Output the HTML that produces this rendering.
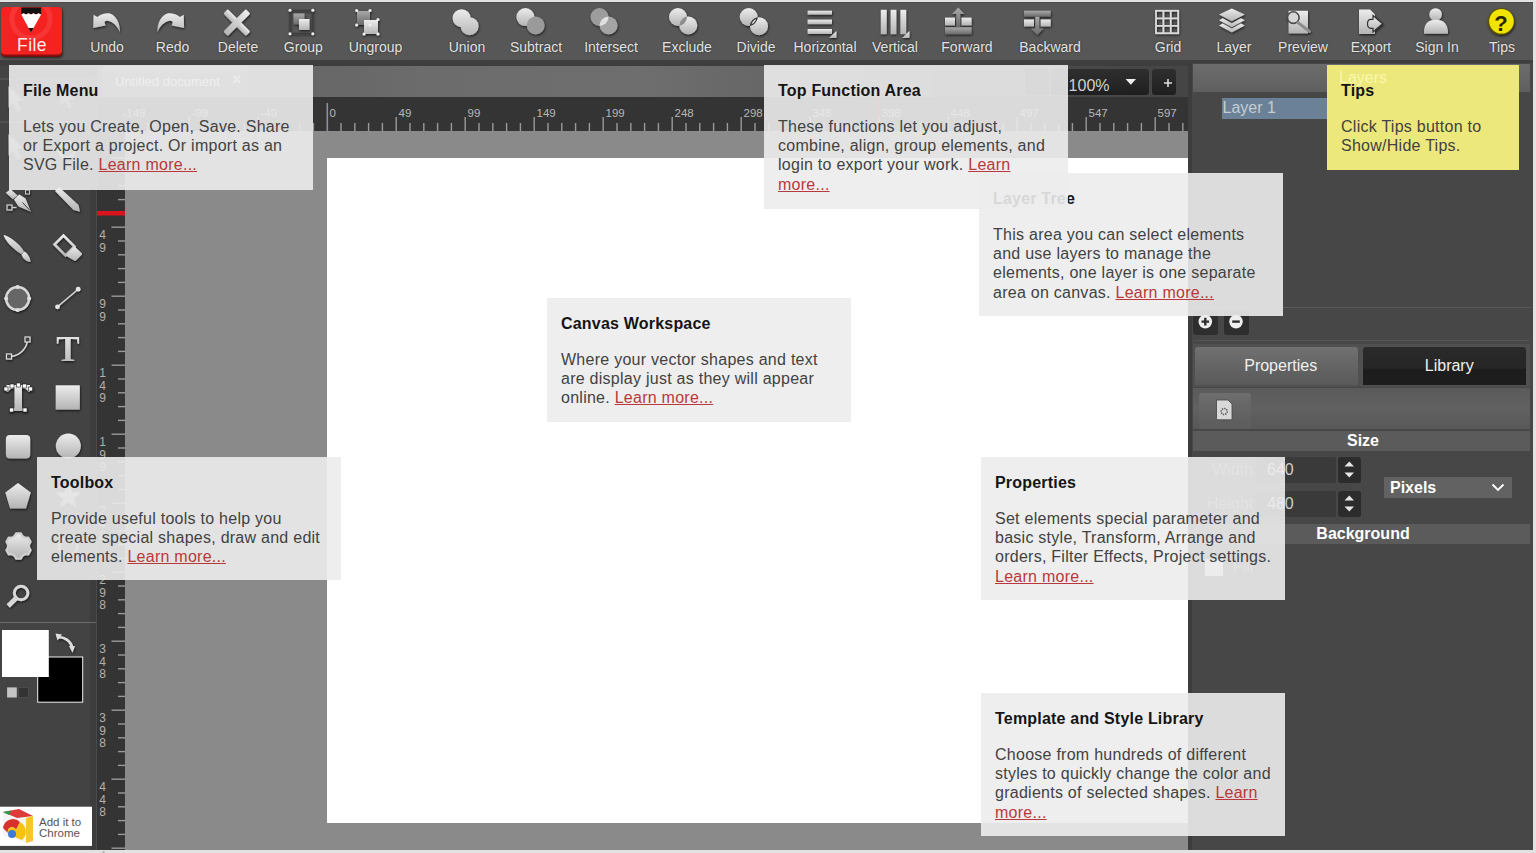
<!DOCTYPE html>
<html><head><meta charset="utf-8">
<style>
*{box-sizing:border-box;margin:0;padding:0}
html,body{width:1536px;height:853px;overflow:hidden;background:#e2e2e2;font-family:"Liberation Sans",sans-serif;position:relative}
.abs{position:absolute}
#toolbar{left:0;top:2px;width:1533px;height:58px;background:#575757;border-top:1px solid #4c4c4c}
#toolbox{left:0;top:60px;width:97px;height:790px;background:linear-gradient(90deg,#434343 0,#434343 90px,#3d3d3d 90px,#3d3d3d 96px,#4a4a4a 96px)}
#tabbar{left:97px;top:60px;width:1091px;height:37px;background:linear-gradient(90deg,#5c5c5c 0%,#6c6c6c 30%,#6e6e6e 50%,#666 62%,#4c4c4c 78%,#454545 100%)}
#tabtop{left:0;top:60px;width:1533px;height:6px;background:#3e3e3e}
#vruler{left:97px;top:131px;width:28px;height:719px;background:#343434}
#hruler{left:97px;top:97px;width:1091px;height:34px;background:#343434}
#canvasarea{left:125px;top:131px;width:1063px;height:719px;background:#8a8a8a}
#canvas{left:327px;top:158px;width:861px;height:665px;background:#fff}
#rpanel{left:1188px;top:63px;width:345px;height:787px;background:#474747;border-left:4px solid #3d3d3d}
.tip{position:absolute;background:rgba(236,236,236,0.9);width:304px;color:#424242}
.tip h3{position:absolute;left:14px;font-size:16px;line-height:19.2px;letter-spacing:0.2px;font-weight:bold;color:#151515;white-space:nowrap}
.tip p{position:absolute;left:14px;font-size:16px;line-height:19.2px;letter-spacing:0.26px;width:278px}
.tip a{color:#b8393b;text-decoration:underline}
.tb{position:absolute;top:39px;font-size:14px;line-height:16px;color:#e2e2e2;text-align:center;width:90px;margin-left:-45px;text-shadow:0 0 2px rgba(0,0,0,.55)}
svg text{font-family:"Liberation Sans",sans-serif}
</style></head><body>
<div id="toolbar" class="abs"></div>
<div id="toolbox" class="abs"></div>
<div id="tabbar" class="abs"></div>
<div id="tabtop" class="abs"></div>
<div id="hruler" class="abs"></div>
<div id="vruler" class="abs"></div>
<div id="canvasarea" class="abs"></div>
<div id="canvas" class="abs"></div>
<div id="rpanel" class="abs"></div>
<div class="abs" style="left:102px;top:66px;width:147px;height:31px;background:linear-gradient(#7a7a7a,#6c6c6c);border-radius:3px 3px 0 0"></div>
<div class="abs" style="left:115px;top:74px;font-size:13px;line-height:15px;color:#fff">Untitled document</div>
<div class="abs" style="left:232px;top:72px;font-size:16px;line-height:16px;color:#ddd;font-weight:bold">&#215;</div>
<div class="abs" style="left:1025px;top:68.5px;width:24px;height:26px;background:#2c2c2c;border-radius:3px"></div>
<div class="abs" style="left:1051px;top:68.5px;width:98px;height:26px;background:linear-gradient(#2e2e2e,#262626 60%,#1e1e1e);border-radius:0 3px 3px 0"></div>
<div class="abs" style="left:1151.7px;top:68.5px;width:24.7px;height:26px;background:linear-gradient(#2e2e2e,#262626 60%,#1e1e1e);border-radius:3px"></div>
<div class="abs" style="left:1068.6px;top:78.4px;font-size:16px;line-height:16px;color:#d0d0d0">100%</div>
<svg class="abs" style="left:1120px;top:74px" width="60" height="16"><path d="M5.6,4.9 L16,4.9 L10.8,10.7Z" fill="#f0f0f0"/><path d="M48,5 V13 M44,9 H52" stroke="#ddd" stroke-width="1.6"/></svg>

<svg class="abs" style="left:0;top:0" width="1536" height="853" viewBox="0 0 1536 853">
<defs>
 <linearGradient id="ig" x1="0" y1="0" x2="0" y2="1"><stop offset="0" stop-color="#ececec"/><stop offset="1" stop-color="#b4b4b4"/></linearGradient>
 <linearGradient id="igd" x1="0" y1="0" x2="0" y2="1"><stop offset="0" stop-color="#a8a8a8"/><stop offset="1" stop-color="#6a6a6a"/></linearGradient>
 <linearGradient id="igu" gradientUnits="userSpaceOnUse" x1="0" y1="9" x2="0" y2="35"><stop offset="0" stop-color="#ececec"/><stop offset="1" stop-color="#b8b8b8"/></linearGradient>
 <filter id="sh" x="-30%" y="-30%" width="160%" height="160%"><feDropShadow dx="0.6" dy="1.2" stdDeviation="0.8" flood-color="#000" flood-opacity="0.7"/></filter>
</defs>
<!-- rulers -->
<g font-size="11.5" fill="#b8b8b8"><rect x="133.3" y="123" width="1.4" height="8" fill="#9a9a9a"/><rect x="147.1" y="123" width="1.4" height="8" fill="#9a9a9a"/><rect x="160.9" y="123" width="1.4" height="8" fill="#9a9a9a"/><rect x="174.7" y="123" width="1.4" height="8" fill="#9a9a9a"/><rect x="188.5" y="117" width="1.4" height="14" fill="#9a9a9a"/><rect x="202.3" y="123" width="1.4" height="8" fill="#9a9a9a"/><rect x="216.1" y="123" width="1.4" height="8" fill="#9a9a9a"/><rect x="229.9" y="123" width="1.4" height="8" fill="#9a9a9a"/><rect x="243.7" y="123" width="1.4" height="8" fill="#9a9a9a"/><rect x="257.5" y="117" width="1.4" height="14" fill="#9a9a9a"/><rect x="271.3" y="123" width="1.4" height="8" fill="#9a9a9a"/><rect x="285.1" y="123" width="1.4" height="8" fill="#9a9a9a"/><rect x="298.9" y="123" width="1.4" height="8" fill="#9a9a9a"/><rect x="312.7" y="123" width="1.4" height="8" fill="#9a9a9a"/><rect x="326.5" y="103" width="1.6" height="28" fill="#8c8ca4"/><rect x="340.3" y="123" width="1.4" height="8" fill="#9a9a9a"/><rect x="354.1" y="123" width="1.4" height="8" fill="#9a9a9a"/><rect x="367.9" y="123" width="1.4" height="8" fill="#9a9a9a"/><rect x="381.7" y="123" width="1.4" height="8" fill="#9a9a9a"/><rect x="395.5" y="117" width="1.4" height="14" fill="#9a9a9a"/><rect x="409.3" y="123" width="1.4" height="8" fill="#9a9a9a"/><rect x="423.1" y="123" width="1.4" height="8" fill="#9a9a9a"/><rect x="436.9" y="123" width="1.4" height="8" fill="#9a9a9a"/><rect x="450.7" y="123" width="1.4" height="8" fill="#9a9a9a"/><rect x="464.5" y="117" width="1.4" height="14" fill="#9a9a9a"/><rect x="478.3" y="123" width="1.4" height="8" fill="#9a9a9a"/><rect x="492.1" y="123" width="1.4" height="8" fill="#9a9a9a"/><rect x="505.9" y="123" width="1.4" height="8" fill="#9a9a9a"/><rect x="519.7" y="123" width="1.4" height="8" fill="#9a9a9a"/><rect x="533.5" y="117" width="1.4" height="14" fill="#9a9a9a"/><rect x="547.3" y="123" width="1.4" height="8" fill="#9a9a9a"/><rect x="561.1" y="123" width="1.4" height="8" fill="#9a9a9a"/><rect x="574.9" y="123" width="1.4" height="8" fill="#9a9a9a"/><rect x="588.7" y="123" width="1.4" height="8" fill="#9a9a9a"/><rect x="602.5" y="117" width="1.4" height="14" fill="#9a9a9a"/><rect x="616.3" y="123" width="1.4" height="8" fill="#9a9a9a"/><rect x="630.1" y="123" width="1.4" height="8" fill="#9a9a9a"/><rect x="643.9" y="123" width="1.4" height="8" fill="#9a9a9a"/><rect x="657.7" y="123" width="1.4" height="8" fill="#9a9a9a"/><rect x="671.5" y="117" width="1.4" height="14" fill="#9a9a9a"/><rect x="685.3" y="123" width="1.4" height="8" fill="#9a9a9a"/><rect x="699.1" y="123" width="1.4" height="8" fill="#9a9a9a"/><rect x="712.9" y="123" width="1.4" height="8" fill="#9a9a9a"/><rect x="726.7" y="123" width="1.4" height="8" fill="#9a9a9a"/><rect x="740.5" y="117" width="1.4" height="14" fill="#9a9a9a"/><rect x="754.3" y="123" width="1.4" height="8" fill="#9a9a9a"/><rect x="768.1" y="123" width="1.4" height="8" fill="#9a9a9a"/><rect x="781.9" y="123" width="1.4" height="8" fill="#9a9a9a"/><rect x="795.7" y="123" width="1.4" height="8" fill="#9a9a9a"/><rect x="809.5" y="117" width="1.4" height="14" fill="#9a9a9a"/><rect x="823.3" y="123" width="1.4" height="8" fill="#9a9a9a"/><rect x="837.1" y="123" width="1.4" height="8" fill="#9a9a9a"/><rect x="850.9" y="123" width="1.4" height="8" fill="#9a9a9a"/><rect x="864.7" y="123" width="1.4" height="8" fill="#9a9a9a"/><rect x="878.5" y="117" width="1.4" height="14" fill="#9a9a9a"/><rect x="892.3" y="123" width="1.4" height="8" fill="#9a9a9a"/><rect x="906.1" y="123" width="1.4" height="8" fill="#9a9a9a"/><rect x="919.9" y="123" width="1.4" height="8" fill="#9a9a9a"/><rect x="933.7" y="123" width="1.4" height="8" fill="#9a9a9a"/><rect x="947.5" y="117" width="1.4" height="14" fill="#9a9a9a"/><rect x="961.3" y="123" width="1.4" height="8" fill="#9a9a9a"/><rect x="975.1" y="123" width="1.4" height="8" fill="#9a9a9a"/><rect x="988.9" y="123" width="1.4" height="8" fill="#9a9a9a"/><rect x="1002.7" y="123" width="1.4" height="8" fill="#9a9a9a"/><rect x="1016.5" y="117" width="1.4" height="14" fill="#9a9a9a"/><rect x="1030.3" y="123" width="1.4" height="8" fill="#9a9a9a"/><rect x="1044.1" y="123" width="1.4" height="8" fill="#9a9a9a"/><rect x="1057.9" y="123" width="1.4" height="8" fill="#9a9a9a"/><rect x="1071.7" y="123" width="1.4" height="8" fill="#9a9a9a"/><rect x="1085.5" y="117" width="1.4" height="14" fill="#9a9a9a"/><rect x="1099.3" y="123" width="1.4" height="8" fill="#9a9a9a"/><rect x="1113.1" y="123" width="1.4" height="8" fill="#9a9a9a"/><rect x="1126.9" y="123" width="1.4" height="8" fill="#9a9a9a"/><rect x="1140.7" y="123" width="1.4" height="8" fill="#9a9a9a"/><rect x="1154.5" y="117" width="1.4" height="14" fill="#9a9a9a"/><rect x="1168.3" y="123" width="1.4" height="8" fill="#9a9a9a"/><rect x="1182.1" y="123" width="1.4" height="8" fill="#9a9a9a"/><text x="122.5" y="116.5">-149</text><text x="191.5" y="116.5">-99</text><text x="260.5" y="116.5">-49</text><text x="329.5" y="116.5">0</text><text x="398.5" y="116.5">49</text><text x="467.5" y="116.5">99</text><text x="536.5" y="116.5">149</text><text x="605.5" y="116.5">199</text><text x="674.5" y="116.5">248</text><text x="743.5" y="116.5">298</text><text x="812.5" y="116.5">348</text><text x="881.5" y="116.5">398</text><text x="950.5" y="116.5">448</text><text x="1019.5" y="116.5">497</text><text x="1088.5" y="116.5">547</text><text x="1157.5" y="116.5">597</text></g>
<g font-size="12" fill="#b0b0b0"><rect x="118" y="143.7" width="7" height="1.4" fill="#9a9a9a"/><rect x="111.5" y="157.5" width="13.5" height="1.4" fill="#9a9a9a"/><rect x="118" y="171.3" width="7" height="1.4" fill="#9a9a9a"/><rect x="118" y="185.1" width="7" height="1.4" fill="#9a9a9a"/><rect x="118" y="198.9" width="7" height="1.4" fill="#9a9a9a"/><rect x="118" y="212.7" width="7" height="1.4" fill="#9a9a9a"/><rect x="111.5" y="226.5" width="13.5" height="1.4" fill="#9a9a9a"/><rect x="118" y="240.3" width="7" height="1.4" fill="#9a9a9a"/><rect x="118" y="254.1" width="7" height="1.4" fill="#9a9a9a"/><rect x="118" y="267.9" width="7" height="1.4" fill="#9a9a9a"/><rect x="118" y="281.7" width="7" height="1.4" fill="#9a9a9a"/><rect x="111.5" y="295.5" width="13.5" height="1.4" fill="#9a9a9a"/><rect x="118" y="309.3" width="7" height="1.4" fill="#9a9a9a"/><rect x="118" y="323.1" width="7" height="1.4" fill="#9a9a9a"/><rect x="118" y="336.9" width="7" height="1.4" fill="#9a9a9a"/><rect x="118" y="350.7" width="7" height="1.4" fill="#9a9a9a"/><rect x="111.5" y="364.5" width="13.5" height="1.4" fill="#9a9a9a"/><rect x="118" y="378.3" width="7" height="1.4" fill="#9a9a9a"/><rect x="118" y="392.1" width="7" height="1.4" fill="#9a9a9a"/><rect x="118" y="405.9" width="7" height="1.4" fill="#9a9a9a"/><rect x="118" y="419.7" width="7" height="1.4" fill="#9a9a9a"/><rect x="111.5" y="433.5" width="13.5" height="1.4" fill="#9a9a9a"/><rect x="118" y="447.3" width="7" height="1.4" fill="#9a9a9a"/><rect x="118" y="461.1" width="7" height="1.4" fill="#9a9a9a"/><rect x="118" y="474.9" width="7" height="1.4" fill="#9a9a9a"/><rect x="118" y="488.7" width="7" height="1.4" fill="#9a9a9a"/><rect x="111.5" y="502.5" width="13.5" height="1.4" fill="#9a9a9a"/><rect x="118" y="516.3" width="7" height="1.4" fill="#9a9a9a"/><rect x="118" y="530.1" width="7" height="1.4" fill="#9a9a9a"/><rect x="118" y="543.9" width="7" height="1.4" fill="#9a9a9a"/><rect x="118" y="557.7" width="7" height="1.4" fill="#9a9a9a"/><rect x="111.5" y="571.5" width="13.5" height="1.4" fill="#9a9a9a"/><rect x="118" y="585.3" width="7" height="1.4" fill="#9a9a9a"/><rect x="118" y="599.1" width="7" height="1.4" fill="#9a9a9a"/><rect x="118" y="612.9" width="7" height="1.4" fill="#9a9a9a"/><rect x="118" y="626.7" width="7" height="1.4" fill="#9a9a9a"/><rect x="111.5" y="640.5" width="13.5" height="1.4" fill="#9a9a9a"/><rect x="118" y="654.3" width="7" height="1.4" fill="#9a9a9a"/><rect x="118" y="668.1" width="7" height="1.4" fill="#9a9a9a"/><rect x="118" y="681.9" width="7" height="1.4" fill="#9a9a9a"/><rect x="118" y="695.7" width="7" height="1.4" fill="#9a9a9a"/><rect x="111.5" y="709.5" width="13.5" height="1.4" fill="#9a9a9a"/><rect x="118" y="723.3" width="7" height="1.4" fill="#9a9a9a"/><rect x="118" y="737.1" width="7" height="1.4" fill="#9a9a9a"/><rect x="118" y="750.9" width="7" height="1.4" fill="#9a9a9a"/><rect x="118" y="764.7" width="7" height="1.4" fill="#9a9a9a"/><rect x="111.5" y="778.5" width="13.5" height="1.4" fill="#9a9a9a"/><rect x="118" y="792.3" width="7" height="1.4" fill="#9a9a9a"/><rect x="118" y="806.1" width="7" height="1.4" fill="#9a9a9a"/><rect x="118" y="819.9" width="7" height="1.4" fill="#9a9a9a"/><rect x="118" y="833.7" width="7" height="1.4" fill="#9a9a9a"/><rect x="111.5" y="847.5" width="13.5" height="1.4" fill="#9a9a9a"/><text x="99.3" y="170.3">0</text><text x="99.3" y="239.3">4</text><text x="99.3" y="251.6">9</text><text x="99.3" y="308.3">9</text><text x="99.3" y="320.6">9</text><text x="99.3" y="377.3">1</text><text x="99.3" y="389.6">4</text><text x="99.3" y="401.9">9</text><text x="99.3" y="446.3">1</text><text x="99.3" y="458.6">9</text><text x="99.3" y="470.9">9</text><text x="99.3" y="515.3">2</text><text x="99.3" y="527.6">4</text><text x="99.3" y="539.9">8</text><text x="99.3" y="584.3">2</text><text x="99.3" y="596.6">9</text><text x="99.3" y="608.9">8</text><text x="99.3" y="653.3">3</text><text x="99.3" y="665.6">4</text><text x="99.3" y="677.9">8</text><text x="99.3" y="722.3">3</text><text x="99.3" y="734.6">9</text><text x="99.3" y="746.9">8</text><text x="99.3" y="791.3">4</text><text x="99.3" y="803.6">4</text><text x="99.3" y="815.9">8</text><text x="99.3" y="860.3">4</text><text x="99.3" y="872.6">9</text><text x="99.3" y="884.9">7</text></g>
<rect x="97" y="211" width="28" height="4.5" fill="#d8141c"/>
<rect x="877" y="97" width="2" height="34" fill="#d01818" opacity="0.8"/>

<!-- toolbar icons -->
<g filter="url(#sh)">
 <!-- File button -->
 <rect x="1" y="7.5" width="61" height="49" rx="4" fill="#8c0a0a"/>
 <rect x="1" y="7" width="61" height="47.5" rx="4" fill="#f52424"/>
</g>
<clipPath id="fc"><rect x="1" y="7" width="61" height="47.5" rx="4"/></clipPath><circle cx="31" cy="19" r="19" fill="none" stroke="#ff7070" stroke-width="5" opacity="0.25" clip-path="url(#fc)"/>
<path d="M21.3,7.6 H41.1 V14.5 L38.6,13.3 36,14.5 33.5,13.3 31,14.5 28.5,13.3 26,14.5 23.6,13.3 21.3,14.5Z" fill="#111"/>
<path d="M21.3,14.5 L23.6,13.3 26,14.5 28.5,13.3 31,14.5 33.5,13.3 36,14.5 38.6,13.3 41.1,14.5 L31,32.5Z" fill="#fff"/>
<path d="M28.4,28 L33.6,28 L31,32.8Z" fill="#111"/>
<text x="32" y="51" font-size="17" fill="#fff0f0" text-anchor="middle" style="letter-spacing:0.4px;font-size:17.5px">File</text>

<g fill="url(#ig)" filter="url(#sh)">
 <!-- Undo -->
 <path d="M93.6,14.8 L97.3,17 C100,14.5 106,12.8 110,13.5 C116,15 120.5,24 119.8,32.3 C117.5,26.5 113,21.5 107.5,20.8 C106,20.7 105,21.3 104.4,22.1 L105.6,25.6 L93.2,27.9 Z"/>
 <!-- Redo -->
 <path transform="translate(277.3,0) scale(-1,1)" d="M93.6,14.8 L97.3,17 C100,14.5 106,12.8 110,13.5 C116,15 120.5,24 119.8,32.3 C117.5,26.5 113,21.5 107.5,20.8 C106,20.7 105,21.3 104.4,22.1 L105.6,25.6 L93.2,27.9 Z"/>
 <!-- Delete -->
 <g transform="translate(236.8,22.6) rotate(45)"><rect x="-16" y="-3.2" width="32" height="6.4" rx="1.6"/><rect x="-3.2" y="-16" width="6.4" height="32" rx="1.6"/></g>
</g>
<!-- Group -->
<g filter="url(#sh)">
 <rect x="290" y="10.5" width="22.5" height="23" fill="none" stroke="#3c3c3c" stroke-width="1.2"/>
 <rect x="293.5" y="13.5" width="11" height="11" fill="url(#igd)"/>
 <rect x="299" y="19" width="10.5" height="11" fill="url(#ig)"/>
 <g fill="#eee"><circle cx="290" cy="10.3" r="1.5"/><circle cx="312.8" cy="10.3" r="1.5"/><circle cx="290" cy="33.8" r="1.5"/><circle cx="312.8" cy="33.8" r="1.5"/></g>
</g>
<!-- Ungroup -->
<g filter="url(#sh)">
 <rect x="357" y="11" width="13" height="14" fill="url(#igd)"/>
 <rect x="364" y="20" width="14" height="14" fill="url(#ig)"/>
 <g fill="#eee"><circle cx="356.6" cy="10.5" r="1.5"/><circle cx="370" cy="10.5" r="1.5"/><circle cx="356.6" cy="25" r="1.5"/><circle cx="370" cy="25" r="1.5"/><circle cx="378" cy="19.5" r="1.5"/><circle cx="364" cy="34" r="1.5"/><circle cx="378" cy="34" r="1.5"/></g>
</g>
<!-- boolean ops -->
<g filter="url(#sh)">
 <g fill="url(#igu)"><circle cx="461.6" cy="18.2" r="9"/><circle cx="469.6" cy="26.2" r="9"/></g>
 <circle cx="525.4" cy="17.1" r="9" fill="url(#ig)"/><circle cx="535.7" cy="25.5" r="9" fill="#9a9a9a"/>
 <circle cx="599.5" cy="17" r="9" fill="#9c9c9c"/><circle cx="608.6" cy="25.5" r="9" fill="#a4a4a4"/>
 <circle cx="678" cy="17" r="9" fill="url(#ig)"/><circle cx="688.3" cy="25.5" r="9" fill="url(#ig)"/>
 <circle cx="748.7" cy="17" r="9" fill="url(#ig)"/><circle cx="759" cy="26.2" r="9" fill="url(#ig)"/>
</g>
<clipPath id="c1"><circle cx="599.5" cy="17" r="9"/></clipPath>
<circle cx="608.6" cy="25.5" r="9" fill="#e0e0e0" clip-path="url(#c1)"/>
<clipPath id="c2"><circle cx="678" cy="17" r="9"/></clipPath>
<circle cx="688.3" cy="25.5" r="9" fill="#8e8e8e" clip-path="url(#c2)"/>
<clipPath id="c3"><circle cx="748.7" cy="17" r="9"/></clipPath>
<circle cx="759" cy="26.2" r="8.4" fill="none" stroke="#333" stroke-width="1.2" clip-path="url(#c3)"/>
<clipPath id="c3b"><circle cx="759" cy="26.2" r="9"/></clipPath><circle cx="748.7" cy="17" r="8.4" fill="none" stroke="#333" stroke-width="1.2" clip-path="url(#c3b)"/>
<!-- Horizontal / Vertical -->
<g fill="url(#ig)" filter="url(#sh)">
 <rect x="807.6" y="10.7" width="24.4" height="4"/><rect x="807.6" y="19.6" width="24.4" height="4.6"/><rect x="807.6" y="29" width="24.4" height="5"/>
 <path d="M829,38 L836.5,38 L836.5,31Z"/>
 <rect x="880.8" y="9.8" width="5.9" height="24.4"/><rect x="890.6" y="9.8" width="5.8" height="24.4"/><rect x="900.4" y="9.8" width="5.8" height="24.4"/>
 <path d="M902,38 L909.5,38 L909.5,31Z"/>
</g>
<!-- Forward -->
<g filter="url(#sh)">
 <rect x="945" y="27.3" width="26.6" height="7" fill="url(#igd)"/>
 <path d="M958.3,7.5 L964.5,14 L960.3,14 L960.3,27.3 L956.3,27.3 L956.3,14 L952,14Z" fill="url(#igd)"/>
 <rect x="945" y="17.6" width="10" height="7.8" fill="url(#ig)"/><rect x="961.6" y="17.6" width="10" height="7.8" fill="url(#ig)"/>
</g>
<!-- Backward -->
<g filter="url(#sh)">
 <rect x="1024" y="10.7" width="26.7" height="6" fill="url(#igd)"/>
 <path d="M1035.3,16.7 L1039.3,16.7 L1039.3,28.5 L1043.5,28.5 L1037.3,35.2 L1031,28.5 L1035.3,28.5Z" fill="url(#igd)"/>
 <rect x="1024" y="19.5" width="10" height="7" fill="url(#ig)"/><rect x="1040.7" y="19.5" width="10" height="7" fill="url(#ig)"/>
</g>
<!-- Grid -->
<g filter="url(#sh)" fill="none" stroke="#dcdcdc" stroke-width="1.8">
 <rect x="1156" y="10.8" width="22.2" height="22.4"/>
 <path d="M1163.4,10.8 V33.2 M1170.8,10.8 V33.2 M1156,18.3 H1178.2 M1156,25.8 H1178.2"/>
</g>
<!-- Layer -->
<g filter="url(#sh)" fill="url(#ig)">
 <path d="M1219,25.5 L1231.8,32.5 L1244.8,25.5 L1241,23.5 L1231.8,28.5 L1222.7,23.5Z"/>
 <path d="M1219,20.2 L1231.8,27.2 L1244.8,20.2 L1241,18.2 L1231.8,23.2 L1222.7,18.2Z"/>
 <path d="M1219,14.5 L1231.8,8.5 L1244.8,14.5 L1231.8,21.2Z"/>
</g>
<!-- Preview -->
<g filter="url(#sh)">
 <path d="M1288.6,10.8 L1308,10.8 L1308,33.4 L1288.6,33.4Z" fill="url(#ig)"/>
 <circle cx="1293.3" cy="17.6" r="5.8" fill="#d6d6d6" stroke="#4a4a4a" stroke-width="1.6"/>
 <path d="M1298,22.6 L1309.5,31.5" stroke="#8c8c8c" stroke-width="3" stroke-linecap="round"/>
</g>
<!-- Export -->
<g filter="url(#sh)">
 <path d="M1359,9.5 L1370,9.5 L1375,14.5 L1375,34 L1359,34Z" fill="url(#ig)"/>
 <path d="M1373,15.5 L1382.6,23.8 L1373,32 L1373,28.3 L1371,28.3 Q1367.5,28.3 1367.5,23.8 Q1367.5,19.4 1371,19.4 L1373,19.4Z" fill="url(#ig)" stroke="#333" stroke-width="1.2"/>
</g>
<!-- Sign in -->
<g filter="url(#sh)" fill="url(#ig)">
 <circle cx="1435.6" cy="14.5" r="6.3"/>
 <path d="M1424,33.8 C1423.5,24 1428,19.8 1435.8,19.8 C1443.6,19.8 1448.2,24 1448,33.8 Z"/>
</g>
<!-- Tips -->
<g filter="url(#sh)">
 <circle cx="1501" cy="21.6" r="13.3" fill="#5a5200"/>
 <circle cx="1501.5" cy="21.2" r="12.3" fill="#f0e400"/>
</g>
<text x="1501" y="31" style="font-size:22px;font-weight:bold" fill="#2a2400" text-anchor="middle">?</text>

<!-- left toolbox separators -->
<rect x="0" y="78.5" width="96" height="1" fill="#5e5e5e"/>
<rect x="0" y="121.5" width="96" height="1" fill="#5e5e5e"/>
<rect x="0" y="622" width="96" height="1" fill="#6a6a6a"/>
<g filter="url(#sh)">
 <g opacity="0.45">
<!-- select arrow (row 1 col 1) -->
 <path d="M8,86 L8,108 L13,103 L17,112 L21,110 L17,101 L24,101Z" fill="url(#ig)"/>
 <!-- node select (row 1 col 2) -->
 <path d="M60,86 L60,106 L65,101.5 L68.5,109 L72,107.5 L68.5,100 L75,100Z" fill="url(#ig)"/>
 <!-- row 2 -->
 <path d="M8,134 L8,156 L13,151 L17,160 L21,158 L17,149 L24,149Z" fill="url(#ig)"/>
 <circle cx="67" cy="150" r="8" fill="none" stroke="#ddd" stroke-width="3"/>
</g>
 <!-- pen -->
 <path d="M5.8,192.8 L10.6,189.2 L17.6,195.6 L12.8,199.2Z" fill="url(#ig)"/>
 <path d="M14,199.5 L19.2,194.5 L25.5,198.5 L31,211.8 L18.5,206.5Z" fill="url(#ig)"/>
 <path d="M22.5,202.5 L30,210.5" stroke="#404040" stroke-width="1"/>
 <rect x="7" y="205" width="5" height="5" fill="none" stroke="#ccc" stroke-width="1.2"/>
 <path d="M12,207.5 H16.5" stroke="#ccc" stroke-width="1.2"/>
 <rect x="25.5" y="190" width="4" height="4" fill="#333" stroke="#ccc" stroke-width="1"/>
 <!-- pencil -->
 <path d="M55,191 L59,187 L78.5,205 L80,211.7 L73.5,210 Z" fill="url(#ig)"/>
 <!-- brush -->
 <path d="M3.5,235 C10,236 22,246 24,252 L21,254 C13,249 5,241 3.5,235Z" fill="url(#ig)"/>
 <path d="M21.5,254.5 L24.5,251.5 C28,254 30.5,258 30.5,262 C26,262 22.5,258 21.5,254.5Z" fill="url(#ig)"/>
 <!-- eraser -->
 <path d="M54.5,244.5 L63.5,235.5 L74.5,246.5 L65.5,255.5Z" fill="none" stroke="url(#ig)" stroke-width="2.6"/>
 <path d="M65.5,255.5 L74.5,246.5 L81.5,253 Q82.5,254 81.5,255 L76,260.5 Q75,261.5 74,260.5Z" fill="url(#ig)"/>
 <!-- ellipse -->
 <circle cx="17.6" cy="298.5" r="11.5" fill="#666" stroke="#d8d8d8" stroke-width="2.4"/>
 <g fill="#e0e0e0"><circle cx="17.6" cy="287" r="2"/><circle cx="17.6" cy="310" r="2"/><circle cx="6.1" cy="298.5" r="2"/><circle cx="29.1" cy="298.5" r="2"/></g>
 <!-- line -->
 <path d="M57.5,306.8 L78.2,289.2" stroke="#ddd" stroke-width="1.4"/>
 <circle cx="57.5" cy="306.8" r="2.4" fill="#e6e6e6"/><circle cx="78.2" cy="289.2" r="2.4" fill="#e6e6e6"/>
 <!-- path -->
 <path d="M10.5,356.5 C20,356 27,348 27.5,340" stroke="#ddd" stroke-width="1.5" fill="none"/>
 <rect x="6.5" y="354" width="5" height="5" fill="#404040" stroke="#ddd" stroke-width="1.2"/>
 <rect x="25" y="337" width="5" height="5" fill="#404040" stroke="#ddd" stroke-width="1.2"/>
</g>
<text x="68" y="360.7" style="font-family:'Liberation Serif';font-size:35px;font-weight:bold" fill="url(#ig)" text-anchor="middle" filter="url(#sh)">T</text>
<g filter="url(#sh)">
 <!-- text path -->
 <path d="M6.5,385 H30 V392 L28.5,392 Q27,388.5 22,388 V407 Q22,409 25,409.5 V411 H11.5 V409.5 Q14.5,409 14.5,407 V388 Q9.5,388.5 8,392 H6.5Z" fill="url(#ig)"/>
 <g fill="#fff" stroke="#222" stroke-width="0.6"><rect x="4" y="387" width="4" height="4"/><rect x="10" y="384" width="4" height="4"/><rect x="16.3" y="383" width="4" height="4"/><rect x="22.5" y="384" width="4" height="4"/><rect x="28.5" y="387" width="4" height="4"/><rect x="9.5" y="408" width="4" height="4"/><rect x="23" y="408" width="4" height="4"/></g>
 <!-- rect -->
 <rect x="55.7" y="385.3" width="24.1" height="24.3" fill="url(#ig)"/>
 <!-- rounded rect -->
 <rect x="5.9" y="435" width="24.3" height="23.6" rx="4" fill="url(#ig)"/>
 <!-- circle -->
 <circle cx="68.3" cy="446" r="12.5" fill="url(#ig)"/>
 <!-- pentagon -->
 <path d="M18,483 L30.8,492.5 L26,508.4 L10,508.4 L5.3,492.5Z" fill="url(#ig)"/>
 <!-- star -->
 <path opacity="0.6" d="M68.3,483 L72,492 L81.5,492.5 L74,498.5 L76.8,508 L68.3,502.7 L59.8,508 L62.6,498.5 L55,492.5 L64.6,492Z" fill="url(#ig)"/>
 <!-- gear star -->
 <path d="M16.1,533.4 L20.9,533.4 Q22.8,538.6 28.2,537.6 L28.2,537.6 L30.6,541.8 Q27.1,546.0 30.6,550.2 L30.6,550.2 L28.2,554.4 Q22.8,553.4 20.9,558.6 L20.9,558.6 L16.1,558.6 Q14.2,553.4 8.8,554.4 L8.8,554.4 L6.4,550.2 Q9.9,546.0 6.4,541.8 L6.4,541.8 L8.8,537.6 Q14.2,538.6 16.1,533.4 Z" fill="url(#ig)" stroke="#d0d0d0" stroke-width="2.2" stroke-linejoin="round"/>
 <!-- spiral/other -->
 <circle cx="68.3" cy="546.5" r="9" fill="none" stroke="#ddd" stroke-width="2.5" opacity="0.5"/>
 <!-- zoom -->
 <circle cx="21.1" cy="593" r="6.8" fill="none" stroke="#d8d8d8" stroke-width="3"/>
 <path d="M16.3,598 L8.2,606" stroke="#d8d8d8" stroke-width="4.6"/>
</g>
<!-- palette -->
<rect x="37.7" y="657" width="45" height="45.2" fill="#000" stroke="#f0f0f0" stroke-width="1"/>
<rect x="2" y="630" width="46.8" height="47" fill="#fff"/>
<g filter="url(#sh)"><path d="M57,637.5 C64,636 71,641 72.5,648.5" stroke="#ddd" stroke-width="2.6" fill="none"/>
<path d="M55.5,633.5 L62,634.5 L57.5,640.5Z M69,646 L75,646 L72.5,652.8Z" fill="#ddd"/></g>
<rect x="7.1" y="687.4" width="9.7" height="10.1" fill="#c4c4c4"/>
<rect x="18.7" y="687.4" width="9.7" height="10.1" fill="#333" stroke="#555" stroke-width="0.6"/>
<!-- add to chrome -->
<rect x="0" y="806.7" width="92" height="39.2" fill="#fff"/>
<path d="M3,812 L19,809 L33,816 L33,841 L27,843 L3,835Z" fill="#f4f4f4"/>
<path d="M3,812 L19,809 L33,816 L17,818Z" fill="#dd3b3b"/>
<path d="M3,812 L11,810.5 L9,815Z" fill="#2a9a4a"/>
<path d="M26,818 L33,816 L33,841 L26,843Z" fill="#f7c72a"/>
<path d="M3,828 A10,10 0 0 1 20,822 L16,830 A4,4 0 0 0 8,833 Z" fill="#d6312d"/>
<path d="M8,833 A4,4 0 0 1 16,830 L20,822 A11,11 0 0 1 22,840 L17,838Z" fill="#f5c30f"/>
<circle cx="12" cy="834" r="4" fill="#3d7bd9"/>
<text x="39" y="825.5" font-size="11.5" fill="#555">Add it to</text>
<text x="39" y="836.5" font-size="11.5" fill="#555">Chrome</text>

</svg>

<!-- toolbar labels -->
<div class="tb" style="left:107px">Undo</div>
<div class="tb" style="left:172.5px">Redo</div>
<div class="tb" style="left:238px">Delete</div>
<div class="tb" style="left:303.3px">Group</div>
<div class="tb" style="left:375.5px">Ungroup</div>
<div class="tb" style="left:467px">Union</div>
<div class="tb" style="left:536px">Subtract</div>
<div class="tb" style="left:611px">Intersect</div>
<div class="tb" style="left:687px">Exclude</div>
<div class="tb" style="left:756px">Divide</div>
<div class="tb" style="left:825px">Horizontal</div>
<div class="tb" style="left:895px">Vertical</div>
<div class="tb" style="left:967px">Forward</div>
<div class="tb" style="left:1050px">Backward</div>
<div class="tb" style="left:1168px">Grid</div>
<div class="tb" style="left:1234px">Layer</div>
<div class="tb" style="left:1303px">Preview</div>
<div class="tb" style="left:1371px">Export</div>
<div class="tb" style="left:1437px">Sign In</div>
<div class="tb" style="left:1502px">Tips</div>

<!-- right panel content -->
<div class="abs" style="left:1192.5px;top:63.8px;width:337px;height:27.8px;background:linear-gradient(#6c6c6c,#5f5f5f)"></div>
<div class="abs" style="left:1221.8px;top:98.2px;width:280px;height:20.5px;background:#6a8197"></div>
<div class="abs" style="left:1222.5px;top:98.2px;font-size:16px;line-height:20px;color:#c6ccd2">Layer 1</div>
<div class="abs" style="left:1193px;top:307px;width:337px;height:1px;background:#5a5a5a"></div>
<!-- +/- -->
<div class="abs" style="left:1193px;top:311px;width:25px;height:23.5px;background:#2e2e2e;border-radius:3px"></div>
<div class="abs" style="left:1223.7px;top:311px;width:25px;height:23.5px;background:#2e2e2e;border-radius:3px"></div>
<svg class="abs" style="left:1190px;top:308px" width="64" height="30">
 <circle cx="15.3" cy="13.6" r="6.8" fill="#eee"/><path d="M15.3,9.8 V17.4 M11.5,13.6 H19.1" stroke="#2e2e2e" stroke-width="2.4"/>
 <circle cx="46" cy="13.6" r="6.8" fill="#eee"/><path d="M42.2,13.6 H49.8" stroke="#2e2e2e" stroke-width="2.4"/>
</svg>
<div class="abs" style="left:1193px;top:339.5px;width:337px;height:1px;background:#545454"></div>
<!-- tabs -->
<div class="abs" style="left:1193px;top:344.4px;width:337px;height:42.5px;background:#505050"></div>
<div class="abs" style="left:1195.2px;top:347px;width:163px;height:38px;background:linear-gradient(#717171,#626262 60%,#5a5a5a);border-radius:3px 3px 0 0;color:#f0f0f0;font-size:16px;line-height:37px;text-align:center;padding-left:8px">Properties</div>
<div class="abs" style="left:1362.6px;top:347px;width:163.3px;height:37.5px;background:linear-gradient(#2a2a2a,#262626 55%,#1c1c1c 60%,#1e1e1e);border-radius:3px 3px 0 0;color:#f0f0f0;font-size:16px;line-height:37px;text-align:center;padding-left:10px">Library</div>
<!-- sub toolbar -->
<div class="abs" style="left:1193px;top:387.5px;width:337px;height:41.5px;background:linear-gradient(#5a5a5a,#616161 50%,#585858)"></div>
<div class="abs" style="left:1199px;top:392.8px;width:52px;height:36.4px;background:linear-gradient(#6e6e6e,#626262 60%,#5c5c5c);border-radius:3px 3px 0 0"></div>
<svg class="abs" style="left:1214px;top:398px" width="22" height="24">
 <path d="M2.5,2 H14 L18,6 V20.5 Q18,21.8 16.5,21.8 H4 Q2.5,21.8 2.5,20.5Z" fill="#d8d8d8" stroke="#444" stroke-width="0.8"/>
 <circle cx="10.2" cy="13.5" r="3" fill="none" stroke="#555" stroke-width="1.6" stroke-dasharray="1.3 1"/>
</svg>
<!-- size header -->
<div class="abs" style="left:1193px;top:430.8px;width:337px;height:20px;background:#5b5b5b;color:#fff;font-weight:bold;font-size:16px;line-height:20px;text-align:center;padding-left:3px">Size</div>
<!-- width/height -->
<div class="abs" style="left:1212px;top:458px;font-size:16px;line-height:24px;color:#8a8a8a">Width</div>
<div class="abs" style="left:1256px;top:457px;width:80px;height:26px;background:#3a3a3a;border-radius:2px"></div>
<div class="abs" style="left:1267px;top:458px;font-size:16px;line-height:24px;color:#cfcfcf">640</div>
<div class="abs" style="left:1338px;top:457px;width:22.5px;height:26px;background:#2c2c2c;border-radius:3px"></div>
<div class="abs" style="left:1207px;top:492px;font-size:16px;line-height:24px;color:#8a8a8a">Height</div>
<div class="abs" style="left:1256px;top:491px;width:80px;height:26px;background:#3a3a3a;border-radius:2px"></div>
<div class="abs" style="left:1267px;top:492px;font-size:16px;line-height:24px;color:#cfcfcf">480</div>
<div class="abs" style="left:1338px;top:491px;width:22.5px;height:26px;background:#2c2c2c;border-radius:3px"></div>
<svg class="abs" style="left:1338px;top:457px" width="23" height="62">
 <path d="M6.5,9.5 L11.3,4.5 L16,9.5Z M6.5,15.5 L11.3,20.5 L16,15.5Z" fill="#e6e6e6"/>
 <path d="M6.5,43.5 L11.3,38.5 L16,43.5Z M6.5,49.5 L11.3,54.5 L16,49.5Z" fill="#e6e6e6"/>
</svg>
<!-- pixels select -->
<div class="abs" style="left:1384px;top:476.7px;width:127.6px;height:21.5px;background:#626262;color:#fff;font-weight:bold;font-size:16px;line-height:21px;padding-left:6px">Pixels</div>
<svg class="abs" style="left:1490px;top:480px" width="16" height="14"><path d="M2.5,4.5 L8,10 L13.5,4.5" stroke="#fff" stroke-width="1.8" fill="none"/></svg>
<!-- background header -->
<div class="abs" style="left:1193px;top:524px;width:337px;height:19.5px;background:#5b5b5b;color:#fff;font-weight:bold;font-size:16px;line-height:20px;text-align:center;padding-left:3px">Background</div>
<!-- fill checkbox -->
<div class="abs" style="left:1205px;top:559px;width:18px;height:17px;background:#e8e8e8"></div>
<div class="abs" style="left:1233px;top:557px;font-size:16px;line-height:20px;color:#8c8c8c">Fill</div>


<!-- tooltips -->
<div class="tip" style="left:9px;top:65px;height:125px">
 <h3 style="top:16px">File Menu</h3>
 <p style="top:52px">Lets you Create, Open, Save. Share or Export a project. Or import as an SVG File. <a>Learn more...</a></p>
</div>
<div class="tip" style="left:979px;top:173px;height:143px">
 <h3 style="top:16px">Layer Tree</h3>
 <p style="top:52px">This area you can select elements and use layers to manage the elements, one layer is one separate area on canvas. <a>Learn more...</a></p>
</div>
<div class="tip" style="left:764px;top:65px;height:144px">
 <h3 style="top:16px">Top Function Area</h3>
 <p style="top:52px">These functions let you adjust, combine, align, group elements, and login to export your work. <a>Learn more...</a></p>
</div>
<div class="tip" style="left:1327px;top:65px;height:105px;width:192px;background:#ece87b">
 <h3 style="top:16px">Tips</h3>
 <p style="top:52px;width:180px">Click Tips button to Show/Hide Tips.</p>
</div>

<div class="tip" style="left:547px;top:298px;height:124px">
 <h3 style="top:16px">Canvas Workspace</h3>
 <p style="top:52px">Where your vector shapes and text are display just as they will appear online. <a>Learn more...</a></p>
</div>
<div class="tip" style="left:37px;top:457px;height:123px">
 <h3 style="top:16px">Toolbox</h3>
 <p style="top:52px">Provide useful tools to help you create special shapes, draw and edit elements. <a>Learn more...</a></p>
</div>
<div class="tip" style="left:981px;top:457px;height:143px">
 <h3 style="top:16px">Properties</h3>
 <p style="top:52px">Set elements special parameter and basic style, Transform, Arrange and orders, Filter Effects, Project settings. <a>Learn more...</a></p>
</div>
<div class="tip" style="left:981px;top:693px;height:143px">
 <h3 style="top:16px">Template and Style Library</h3>
 <p style="top:52px">Choose from hundreds of different styles to quickly change the color and gradients of selected shapes. <a>Learn more...</a></p>
</div>
<div class="abs" style="left:1192.5px;top:63.8px;width:337px;height:27.8px;text-align:center;font-size:16px;line-height:27px;color:rgba(255,255,200,0.7);padding-left:4px">Layers</div>
</body></html>
